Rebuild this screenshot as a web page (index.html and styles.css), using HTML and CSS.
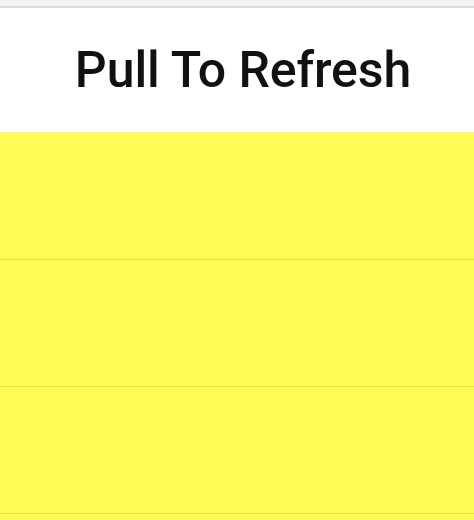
FILE: index.html
```html
<!DOCTYPE html>
<html>
<head>
<meta charset="utf-8">
<link rel="stylesheet" href="styles.css">
</head>
<body>
<div class="screen">
  <div class="topband"></div>
  <header class="header">
    <h1 class="title">Pull To Refresh</h1>
  </header>
  <div class="list">
    <div class="row"></div>
    <div class="row"></div>
    <div class="row"></div>
    <div class="row"></div>
  </div>
</div>
</body>
</html>
```
FILE: styles.css
```css
html, body {
  margin: 0;
  padding: 0;
  background: #fffd55;
}
.screen {
  width: 474px;
  height: 520px;
  overflow: hidden;
  display: flex;
  flex-direction: column;
}
.topband {
  height: 6px;
  background: #f3f3f3;
  border-bottom: 2px solid #dadada;
  flex: none;
}
.header {
  height: 124px;
  background: #ffffff;
  display: flex;
  align-items: center;
  justify-content: center;
  padding-left: 12px;
  flex: none;
  border-bottom: 1px solid #eeeed8;
}
.title {
  margin: 0;
  font-family: Roboto, "Noto Sans", sans-serif;
  font-weight: 500;
  font-size: 50px;
  color: #111111;
  letter-spacing: -0.1px;
}
.list {
  display: flex;
  flex-direction: column;
}
.row {
  height: 126px;
  flex: none;
  background: #fffd55;
  border-bottom: 1px solid #e6e04e;
}
```
